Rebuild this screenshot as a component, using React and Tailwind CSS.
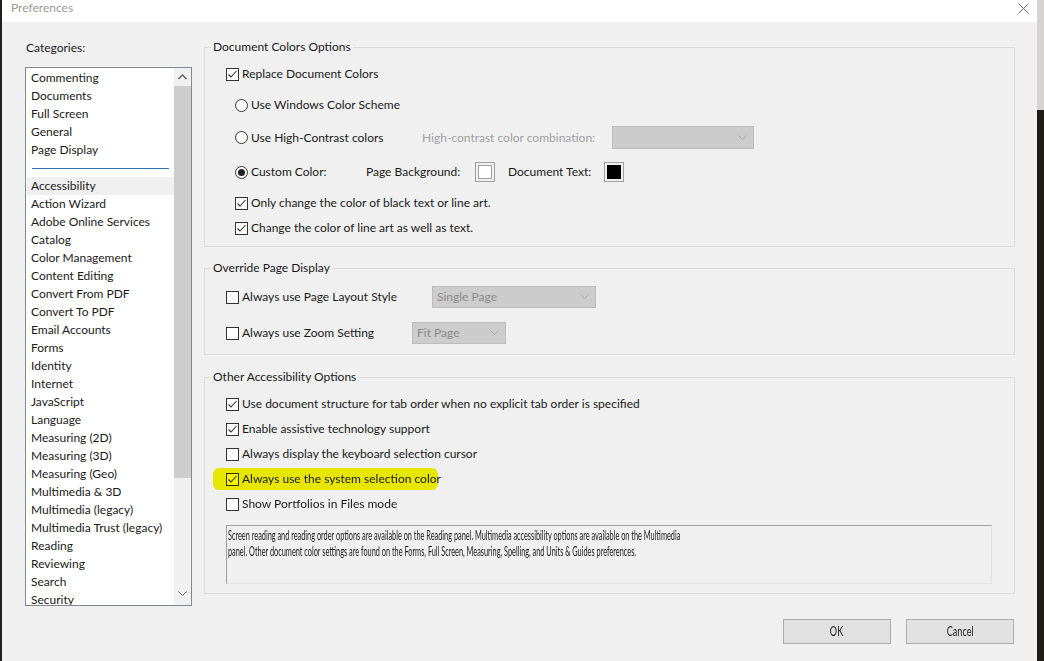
import React from 'react'

const FONT = { fontFamily: 'Lato, "Noto Sans", sans-serif' }

const categories = [
  'Commenting', 'Documents', 'Full Screen', 'General', 'Page Display', '---',
  'Accessibility', 'Action Wizard', 'Adobe Online Services', 'Catalog', 'Color Management',
  'Content Editing', 'Convert From PDF', 'Convert To PDF', 'Email Accounts', 'Forms',
  'Identity', 'Internet', 'JavaScript', 'Language', 'Measuring (2D)', 'Measuring (3D)',
  'Measuring (Geo)', 'Multimedia & 3D', 'Multimedia (legacy)', 'Multimedia Trust (legacy)',
  'Reading', 'Reviewing', 'Search', 'Security',
]

function Check({ checked }) {
  return (
    <svg width="13" height="13" viewBox="0 0 13 13" className="shrink-0">
      <rect x="0.5" y="0.5" width="12" height="12" fill="#fff" stroke="#333" />
      {checked && <path d="M2.5 6.5 L5 9 L10.5 3" fill="none" stroke="#333" strokeWidth="1.1" />}
    </svg>
  )
}

function Radio({ checked }) {
  return (
    <svg width="13" height="13" viewBox="0 0 13 13" className="shrink-0">
      <circle cx="6.5" cy="6.5" r="6" fill="#fff" stroke="#333" />
      {checked && <circle cx="6.5" cy="6.5" r="3.5" fill="#222" />}
    </svg>
  )
}

function Chevron({ color = '#a8a8a8' }) {
  return (
    <svg width="9" height="6" viewBox="0 0 9 6">
      <path d="M0.5 0.5 L4.5 4.5 L8.5 0.5" fill="none" stroke={color} strokeWidth="1" />
    </svg>
  )
}

function Dropdown({ value, className }) {
  return (
    <div className={`flex items-center justify-between bg-[#cccccc] border border-[#bcbcbc] pl-[4px] pr-[6px] text-[#8a8a8a] ${className}`}>
      <span>{value}</span>
      <Chevron />
    </div>
  )
}

function Group({ title, className, children }) {
  return (
    <fieldset className={`border border-[#dcdcdc] ${className}`}>
      <legend className="ml-[6px] px-[2px] leading-[14px] text-[#1a1a1a]">{title}</legend>
      {children}
    </fieldset>
  )
}

function CheckRow({ checked, label, className = '' }) {
  return (
    <div className={`flex items-center h-[20px] gap-[3px] ${className}`}>
      <Check checked={checked} />
      <span>{label}</span>
    </div>
  )
}

function CategoryList() {
  return (
    <div className="relative w-[167px] h-[539px] border border-[#828790] bg-white overflow-hidden flex">
      <div className="flex-1 flex flex-col pl-[1px] pt-[1px]">
        {categories.map((c) =>
          c === '---' ? (
            <div key="sep" className="h-[18px] shrink-0 pt-[9px] pl-[5px]">
              <div className="w-[137px] h-[1px] bg-[#2e77b5]" />
            </div>
          ) : (
            <div
              key={c}
              className={`h-[18px] shrink-0 leading-[18px] pl-[4px] whitespace-nowrap ${c === 'Accessibility' ? 'bg-[#f0f0f0]' : ''}`}
            >
              {c}
            </div>
          )
        )}
      </div>
      <div className="w-[17px] bg-[#f0f0f0] flex flex-col">
        <div className="h-[18px] flex items-center justify-center">
          <svg width="9" height="6" viewBox="0 0 9 6">
            <path d="M0.5 5 L4.5 1 L8.5 5" fill="none" stroke="#606060" strokeWidth="1.4" />
          </svg>
        </div>
        <div className="h-[392px] bg-[#cdcdcd]" />
        <div className="flex-1" />
        <div className="h-[18px] flex items-center justify-center mb-[2px]">
          <Chevron color="#606060" />
        </div>
      </div>
    </div>
  )
}

export default function App() {
  return (
    <div className="w-[1044px] h-[661px] flex overflow-hidden text-[12px] text-[#1a1a1a]" style={FONT}>
      <div className="w-[2px] bg-[#24201c]" />
      <div className="w-[1035px] flex flex-col">
        {/* title bar */}
        <div className="h-[22px] bg-white flex items-center justify-between pl-[9px] pr-[8px] shrink-0">
          <span className="text-[#9a9a9a] leading-[14px] -mt-[6px]">Preferences</span>
          <svg width="11" height="11" viewBox="0 0 11 11" className="-mt-[6px]">
            <path d="M0.5 0.5 L10.5 10.5 M10.5 0.5 L0.5 10.5" stroke="#6f6f6f" strokeWidth="1" />
          </svg>
        </div>

        {/* body */}
        <div className="flex-1 bg-[#f0f0f0] flex pl-[23px] pt-[18px]">
          <div className="flex flex-col w-[167px] pt-[1px]">
            <div className="leading-[14px] pl-[1px]">Categories:</div>
            <div className="mt-[12px]">
              <CategoryList />
            </div>
          </div>

          <div className="ml-[12px] w-[811px] flex flex-col">
            <Group title="Document Colors Options" className="pb-[8px]">
              <div className="pl-[21px] pt-[10px]">
                <CheckRow checked label="Replace Document Colors" />
                <div className="pl-[9px]">
                  <div className="flex items-center h-[20px] gap-[3px] mt-[11px]">
                    <Radio />
                    <span>Use Windows Color Scheme</span>
                  </div>
                  <div className="flex items-center h-[23px] mt-[11px]">
                    <div className="w-[187px] flex items-center gap-[3px]">
                      <Radio />
                      <span>Use High-Contrast colors</span>
                    </div>
                    <span className="w-[190px] text-[#a0a0a0]">High-contrast color combination:</span>
                    <Dropdown value="" className="w-[142px] h-[23px]" />
                  </div>
                  <div className="flex items-center h-[20px] mt-[13px]">
                    <div className="w-[131px] flex items-center gap-[3px]">
                      <Radio checked />
                      <span>Custom Color:</span>
                    </div>
                    <span className="w-[109px]">Page Background:</span>
                    <div className="w-[20px] h-[20px] border border-[#a0a0a0] p-[2px]">
                      <div className="w-full h-full bg-white border border-[#a0a0a0]" />
                    </div>
                    <span className="ml-[13px] w-[96px]">Document Text:</span>
                    <div className="w-[20px] h-[20px] border border-[#a0a0a0] p-[2px]">
                      <div className="w-full h-full bg-black" />
                    </div>
                  </div>
                  <CheckRow checked label="Only change the color of black text or line art." className="mt-[11px]" />
                  <CheckRow checked label="Change the color of line art as well as text." className="mt-[5px]" />
                </div>
              </div>
            </Group>

            <Group title="Override Page Display" className="mt-[14px] pb-[10px]">
              <div className="pl-[21px] pt-[11px]">
                <div className="flex items-center h-[22px]">
                  <div className="w-[206px] flex items-center gap-[3px]">
                    <Check />
                    <span>Always use Page Layout Style</span>
                  </div>
                  <Dropdown value="Single Page" className="w-[164px] h-[22px]" />
                </div>
                <div className="flex items-center h-[22px] mt-[14px]">
                  <div className="w-[186px] flex items-center gap-[3px]">
                    <Check />
                    <span>Always use Zoom Setting</span>
                  </div>
                  <Dropdown value="Fit Page" className="w-[94px] h-[22px]" />
                </div>
              </div>
            </Group>

            <Group title="Other Accessibility Options" className="mt-[15px] pb-[9px]">
              <div className="pl-[21px] pt-[10px]">
                <div className="flex flex-col gap-[5px]">
                  <CheckRow checked label="Use document structure for tab order when no explicit tab order is specified" />
                  <CheckRow checked label="Enable assistive technology support" />
                  <CheckRow label="Always display the keyboard selection cursor" />
                  <div className="relative">
                    <CheckRow checked label="Always use the system selection color" />
                    <span className="absolute left-[-13px] top-[-1px] w-[225px] h-[22px] bg-[#f5f500] rounded-[6px] mix-blend-multiply" />
                  </div>
                  <CheckRow label="Show Portfolios in Files mode" />
                </div>
                <div className="mt-[11px] w-[766px] h-[59px] border border-t-[#a0a0a0] border-l-[#a0a0a0] border-r-[#e3e3e3] border-b-[#e3e3e3] bg-[#f0f0f0] pl-[1px] pt-[1px] text-[13px] leading-[16px] whitespace-nowrap">
                  <span className="origin-left scale-x-[0.565] inline-block">
                    Screen reading and reading order options are available on the Reading panel. Multimedia accessibility options are available on the Multimedia
                    <br />
                    panel. Other document color settings are found on the Forms, Full Screen, Measuring, Spelling, and Units &amp; Guides preferences.
                  </span>
                </div>
              </div>
            </Group>

            <div className="mt-[25px] flex justify-end gap-[15px] pr-[1px]">
              <button className="w-[108px] h-[25px] bg-[#e1e1e1] border border-[#adadad] text-[13px] flex items-center justify-center">
                <span className="scale-x-[0.7] inline-block">OK</span>
              </button>
              <button className="w-[108px] h-[25px] bg-[#e1e1e1] border border-[#adadad] text-[13px] flex items-center justify-center">
                <span className="scale-x-[0.7] inline-block">Cancel</span>
              </button>
            </div>
          </div>
        </div>
      </div>
      <div className="w-[7px] flex flex-col">
        <div className="h-[110px] bg-[#d6d4d0]" />
        <div className="flex-1 bg-[#1f1b17]" />
      </div>
    </div>
  )
}
